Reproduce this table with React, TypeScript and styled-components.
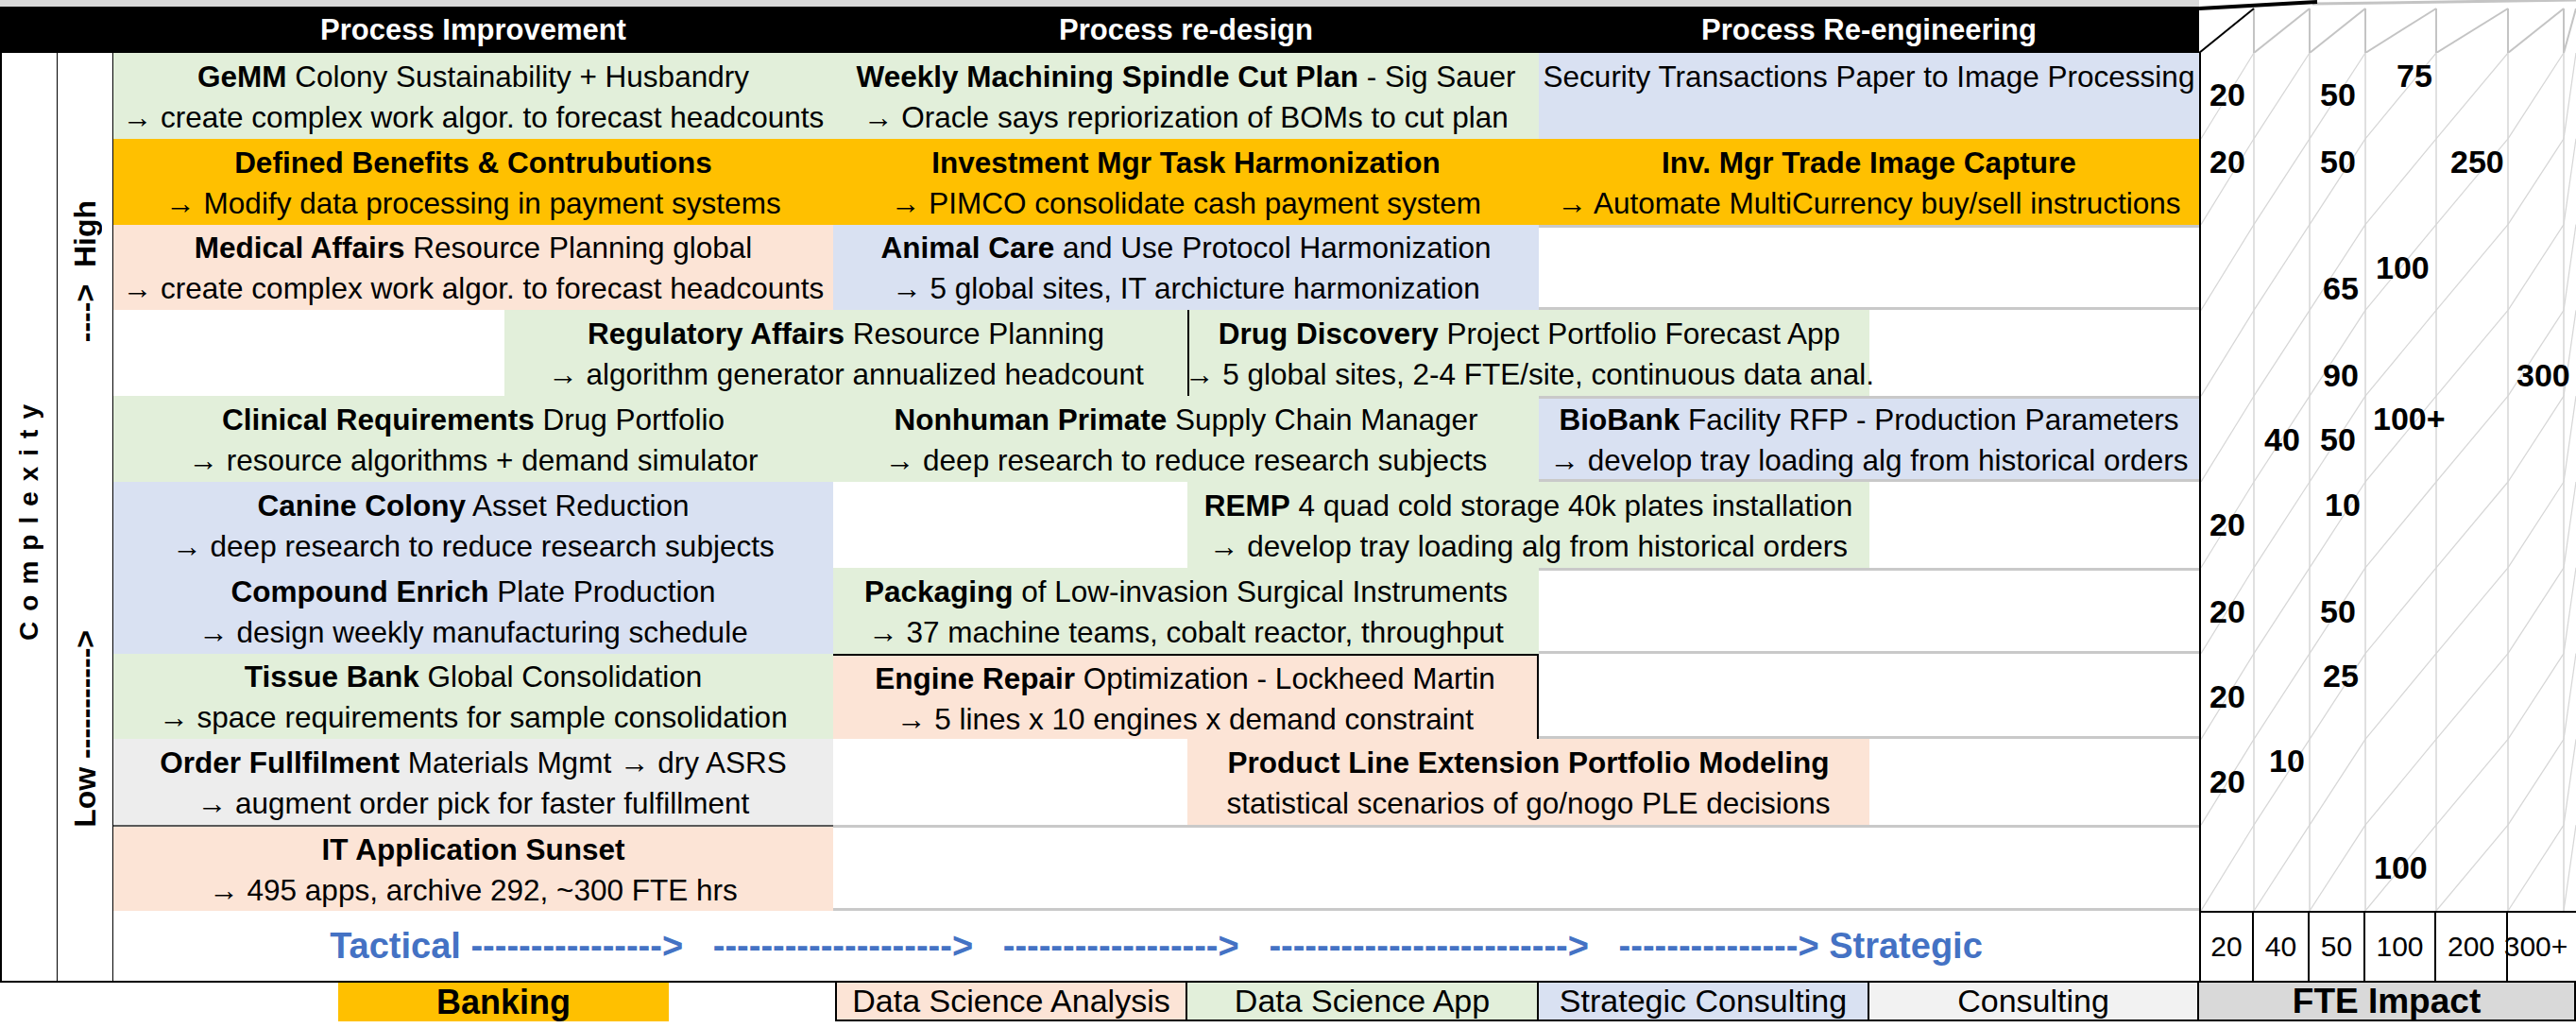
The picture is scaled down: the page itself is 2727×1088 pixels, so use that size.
import React from "react";
import styled, { createGlobalStyle } from "styled-components";

const GlobalStyle = createGlobalStyle`
  html, body {
    margin: 0;
    padding: 0;
    overflow: hidden;
    background: #ffffff;
  }
  body {
    font-family: "Liberation Sans", Arial, sans-serif;
    color: #000000;
  }
`;

const TONES = {
  green: "#e2efda",
  blue: "#d9e1f2",
  peach: "#fce4d6",
  orange: "#ffc000",
  gray: "#ededed",
  light: "#f2f2f2",
  fte: "#d9d9d9",
  white: "#ffffff",
};

type Tone = keyof typeof TONES;

const GRAY_RULE = "3px solid #c9c9c9";
const BLACK_RULE = "2px solid #000000";

// FTE column edges, from the panel's inner left edge
const FTE_COLS = [0, 56, 115, 174, 249, 325, 384, 397];
const ROW_H = 90.8;

type Entry = {
  row: number;
  col: number;
  span: number;
  tone: Tone;
  title?: string;
  rest?: string;
  sub?: string;
  bt?: string;
  bb?: string;
  bl?: string;
  br?: string;
};

const CELLS: Entry[] = [
  { row: 1, col: 1, span: 2, tone: "green", title: "GeMM", rest: " Colony Sustainability + Husbandry", sub: "→ create complex work algor. to forecast headcounts" },
  { row: 1, col: 3, span: 2, tone: "green", title: "Weekly Machining Spindle Cut Plan", rest: " - Sig Sauer", sub: "→ Oracle says repriorization of BOMs to cut plan" },
  { row: 1, col: 5, span: 2, tone: "blue", rest: "Security Transactions Paper to Image Processing", sub: "\u00a0" },
  { row: 2, col: 1, span: 2, tone: "orange", title: "Defined Benefits & Contrubutions", sub: "→ Modify data processing in payment systems" },
  { row: 2, col: 3, span: 2, tone: "orange", title: "Investment Mgr Task Harmonization", sub: "→ PIMCO consolidate cash payment system" },
  { row: 2, col: 5, span: 2, tone: "orange", title: "Inv. Mgr Trade Image Capture", sub: "→ Automate MultiCurrency buy/sell instructions" },
  { row: 3, col: 1, span: 2, tone: "peach", title: "Medical Affairs", rest: " Resource Planning global", sub: "→ create complex work algor. to forecast headcounts" },
  { row: 3, col: 3, span: 2, tone: "blue", title: "Animal Care", rest: " and Use Protocol Harmonization", sub: "→ 5 global sites, IT archicture harmonization" },
  { row: 3, col: 5, span: 2, tone: "white", bt: GRAY_RULE, bb: GRAY_RULE },
  { row: 4, col: 1, span: 1, tone: "white" },
  { row: 4, col: 2, span: 2, tone: "green", title: "Regulatory Affairs", rest: " Resource Planning", sub: "→ algorithm generator annualized headcount" },
  { row: 4, col: 4, span: 2, tone: "green", title: "Drug Discovery", rest: " Project Portfolio Forecast App", sub: "→ 5 global sites, 2-4 FTE/site, continuous data anal.", bl: BLACK_RULE },
  { row: 4, col: 6, span: 1, tone: "white" },
  { row: 5, col: 1, span: 2, tone: "green", title: "Clinical Requirements", rest: " Drug Portfolio", sub: "→ resource algorithms + demand simulator" },
  { row: 5, col: 3, span: 2, tone: "green", title: "Nonhuman Primate", rest: " Supply Chain Manager", sub: "→ deep research to reduce research subjects" },
  { row: 5, col: 5, span: 2, tone: "blue", title: "BioBank", rest: " Facility RFP - Production Parameters", sub: "→ develop tray loading alg from historical orders", bt: GRAY_RULE, bb: GRAY_RULE },
  { row: 6, col: 1, span: 2, tone: "blue", title: "Canine Colony", rest: " Asset Reduction", sub: "→ deep research to reduce research subjects" },
  { row: 6, col: 3, span: 1, tone: "white" },
  { row: 6, col: 4, span: 2, tone: "green", title: "REMP", rest: " 4 quad cold storage 40k plates installation", sub: "→ develop tray loading alg from historical orders" },
  { row: 6, col: 6, span: 1, tone: "white" },
  { row: 7, col: 1, span: 2, tone: "blue", title: "Compound Enrich", rest: " Plate Production", sub: "→ design weekly manufacturing schedule" },
  { row: 7, col: 3, span: 2, tone: "green", title: "Packaging", rest: " of Low-invasion Surgical Instruments", sub: "→ 37 machine teams, cobalt reactor, throughput" },
  { row: 7, col: 5, span: 2, tone: "white", bt: GRAY_RULE, bb: GRAY_RULE },
  { row: 8, col: 1, span: 2, tone: "green", title: "Tissue Bank", rest: " Global Consolidation", sub: "→ space requirements for sample consolidation" },
  { row: 8, col: 3, span: 2, tone: "peach", title: "Engine Repair", rest: " Optimization - Lockheed Martin", sub: "→ 5 lines x 10 engines x demand constraint", bt: BLACK_RULE, br: BLACK_RULE },
  { row: 8, col: 5, span: 2, tone: "white", bb: GRAY_RULE },
  { row: 9, col: 1, span: 2, tone: "gray", title: "Order Fullfilment", rest: " Materials Mgmt → dry ASRS", sub: "→ augment order pick for faster fulfillment" },
  { row: 9, col: 3, span: 1, tone: "white" },
  { row: 9, col: 4, span: 2, tone: "peach", title: "Product Line Extension Portfolio Modeling", sub: "statistical scenarios of go/nogo PLE decisions" },
  { row: 9, col: 6, span: 1, tone: "white" },
  { row: 10, col: 1, span: 2, tone: "peach", title: "IT Application Sunset", sub: "→ 495 apps, archive 292, ~300 FTE hrs", bt: "2px solid #595959" },
  { row: 10, col: 3, span: 4, tone: "white", bt: GRAY_RULE, bb: GRAY_RULE },
];

const FTE_MARKS = [
  { v: "20", x: 2339, y: 100 },
  { v: "50", x: 2456, y: 100 },
  { v: "75", x: 2537, y: 80 },
  { v: "20", x: 2339, y: 171 },
  { v: "50", x: 2456, y: 171 },
  { v: "250", x: 2594, y: 171 },
  { v: "100", x: 2515, y: 283 },
  { v: "65", x: 2459, y: 305 },
  { v: "90", x: 2459, y: 397 },
  { v: "300", x: 2664, y: 397 },
  { v: "100+", x: 2512, y: 443 },
  { v: "40", x: 2397, y: 465 },
  { v: "50", x: 2456, y: 465 },
  { v: "10", x: 2461, y: 534 },
  { v: "20", x: 2339, y: 555 },
  { v: "20", x: 2339, y: 647 },
  { v: "50", x: 2456, y: 647 },
  { v: "25", x: 2459, y: 715 },
  { v: "20", x: 2339, y: 737 },
  { v: "10", x: 2402, y: 805 },
  { v: "20", x: 2339, y: 827 },
  { v: "100", x: 2513, y: 918 },
];

const SCALE = ["20", "40", "50", "100", "200", "300+", ""];

const Page = styled.div`
  width: 2727px;
  height: 1088px;
  display: flex;
  flex-direction: column;
  overflow: hidden;
`;

const Board = styled.div`
  display: flex;
  flex: none;
  height: 1040px;
  box-sizing: border-box;
  border-bottom: 2px solid #000;
`;

const Matrix = styled.div`
  width: 2328px;
  display: flex;
  flex-direction: column;
`;

const TopBar = styled.div`
  flex: none;
  height: 7px;
  background: #d9d9d9;
`;

const HeaderBar = styled.div`
  flex: none;
  height: 49px;
  background: #000;
  display: grid;
  grid-template-columns: 120px 762px 747px 699px;
  align-items: center;
`;

const HeaderTitle = styled.div`
  color: #fff;
  font-weight: 700;
  font-size: 31px;
  text-align: center;
  white-space: nowrap;
`;

const MatrixBody = styled.div`
  flex: 1;
  display: flex;
  min-height: 0;
`;

const ComplexityCol = styled.div`
  width: 61px;
  box-sizing: border-box;
  border-left: 2px solid #000;
  border-right: 1px solid #000;
  display: flex;
  align-items: center;
  justify-content: center;
`;

const LevelCol = styled.div`
  width: 59px;
  box-sizing: border-box;
  border-right: 1px solid #000;
  display: flex;
  flex-direction: column;
`;

const LevelHalf = styled.div<{ $lift: number }>`
  flex: 1;
  display: flex;
  align-items: center;
  justify-content: center;
  padding-bottom: ${(p) => p.$lift}px;
`;

const VerticalLabel = styled.span<{ $size: number; $spacing?: number }>`
  writing-mode: vertical-rl;
  transform: rotate(180deg);
  font-weight: 700;
  font-size: ${(p) => p.$size}px;
  letter-spacing: ${(p) => p.$spacing ?? 0}px;
  white-space: pre;
  line-height: 1;
`;

const Content = styled.div`
  flex: 1;
  display: flex;
  flex-direction: column;
`;

const Grid = styled.div`
  flex: none;
  height: 908px;
  display: grid;
  grid-template-columns: 414px 348px 375px 372px 350px 349px;
  grid-template-rows: repeat(10, minmax(0, 1fr));
`;

const Cell = styled.div<{
  $row: number;
  $col: number;
  $span: number;
  $tone: Tone;
  $bt?: string;
  $bb?: string;
  $bl?: string;
  $br?: string;
}>`
  grid-row: ${(p) => p.$row};
  grid-column: ${(p) => p.$col} / span ${(p) => p.$span};
  position: relative;
  z-index: ${(p) => (p.$tone === "white" ? 0 : 1)};
  background: ${(p) => TONES[p.$tone]};
  box-sizing: border-box;
  border-top: ${(p) => p.$bt ?? "none"};
  border-bottom: ${(p) => p.$bb ?? "none"};
  border-left: ${(p) => p.$bl ?? "none"};
  border-right: ${(p) => p.$br ?? "none"};
  padding-top: 3px;
  display: flex;
  flex-direction: column;
  align-items: center;
  justify-content: center;
  font-size: 31.5px;
  line-height: 43px;
  white-space: nowrap;
  min-width: 0;
  min-height: 0;
`;

const Line = styled.div``;

const Strong = styled.b`
  font-weight: 700;
`;

const TacticalRow = styled.div`
  flex: none;
  height: 74px;
  display: flex;
  align-items: center;
  justify-content: center;
  color: #4472c4;
  font-weight: 700;
  font-size: 38px;
  white-space: pre;
`;

const FtePanel = styled.div`
  width: 399px;
  display: flex;
  flex-direction: column;
  overflow: hidden;
`;

const FteHead = styled.div`
  flex: none;
  height: 56px;
`;

const FteBody = styled.div`
  flex: none;
  position: relative;
  height: 908px;
  border-left: 2px solid #000;
`;

const Drawing = styled.svg`
  position: absolute;
  inset: 0;
  display: block;
`;

const Mark = styled.div<{ $x: number; $y: number }>`
  position: absolute;
  left: ${(p) => p.$x}px;
  top: ${(p) => p.$y}px;
  font-weight: 700;
  font-size: 34px;
  line-height: 34px;
  white-space: nowrap;
`;

const FteScale = styled.div`
  flex: none;
  height: 74px;
  box-sizing: border-box;
  border-left: 2px solid #000;
  border-top: 2px solid #000;
  display: grid;
  grid-template-columns: 56px 59px 59px 75px 76px 59px 13px;
`;

const ScaleCell = styled.div<{ $last?: boolean }>`
  box-sizing: border-box;
  border-right: ${(p) => (p.$last ? "none" : "2px solid #000")};
  display: flex;
  align-items: center;
  justify-content: center;
  font-size: 30px;
  white-space: nowrap;
`;

const Legend = styled.div`
  display: flex;
  flex: none;
  height: 41px;
`;

const LegendGap = styled.div<{ $w: number }>`
  width: ${(p) => p.$w}px;
`;

const LegendItem = styled.div<{
  $w: number;
  $tone: Tone;
  $plain?: boolean;
  $first?: boolean;
  $bold?: boolean;
  $size: number;
}>`
  width: ${(p) => p.$w}px;
  flex: none;
  box-sizing: border-box;
  background: ${(p) => TONES[p.$tone]};
  border-right: ${(p) => (p.$plain ? "none" : "2px solid #000")};
  border-bottom: ${(p) => (p.$plain ? "none" : "2px solid #000")};
  border-left: ${(p) => (p.$first ? "2px solid #000" : "none")};
  display: flex;
  align-items: center;
  justify-content: center;
  font-size: ${(p) => p.$size}px;
  font-weight: ${(p) => (p.$bold ? 700 : 400)};
  white-space: nowrap;
`;

function FteHeadDrawing() {
  const b = [0, 58, 117, 176, 251, 327, 386, 399];
  return (
    <svg width="399" height="56" viewBox="0 0 399 56">
      {b.slice(1, 7).map((x) => (
        <line key={"v" + x} x1={x} y1={9} x2={x} y2={56} stroke="#c4c4c4" strokeWidth={2} />
      ))}
      {b.slice(1, 7).map((x, i) => (
        <line key={"d" + x} x1={x} y1={56} x2={b[i + 2]} y2={9} stroke="#c4c4c4" strokeWidth={2} />
      ))}
      <line x1={120} y1={4} x2={399} y2={0} stroke="#c4c4c4" strokeWidth={3} />
      <line x1={0} y1={9} x2={125} y2={2} stroke="#000" strokeWidth={4} />
      <line x1={0} y1={56} x2={58} y2={9} stroke="#000" strokeWidth={2} />
    </svg>
  );
}

function FteHatch() {
  const lines: React.ReactElement[] = [];
  for (let c = 0; c < FTE_COLS.length - 1; c++) {
    for (let r = 0; r < 10; r++) {
      lines.push(
        <line
          key={`${c}-${r}`}
          x1={FTE_COLS[c]}
          y1={(r + 1) * ROW_H}
          x2={FTE_COLS[c + 1]}
          y2={r * ROW_H}
          stroke="#d6d6d6"
          strokeWidth={1.2}
        />
      );
    }
  }
  return (
    <Drawing width="397" height="908" viewBox="0 0 397 908">
      {FTE_COLS.slice(1, 7).map((x) => (
        <line key={"v" + x} x1={x} y1={0} x2={x} y2={908} stroke="#d6d6d6" strokeWidth={1.5} />
      ))}
      {lines}
    </Drawing>
  );
}

export default function App() {
  return (
    <Page>
      <GlobalStyle />
      <Board>
        <Matrix>
          <TopBar />
          <HeaderBar>
            <span />
            <HeaderTitle>Process Improvement</HeaderTitle>
            <HeaderTitle>Process re-design</HeaderTitle>
            <HeaderTitle>Process Re-engineering</HeaderTitle>
          </HeaderBar>
          <MatrixBody>
            <ComplexityCol>
              <VerticalLabel $size={28} $spacing={11}>
                Complexity
              </VerticalLabel>
            </ComplexityCol>
            <LevelCol>
              <LevelHalf $lift={22}>
                <VerticalLabel $size={32}>{"---->  High"}</VerticalLabel>
              </LevelHalf>
              <LevelHalf $lift={35}>
                <VerticalLabel $size={32}>{"Low ----------->"}</VerticalLabel>
              </LevelHalf>
            </LevelCol>
            <Content>
              <Grid>
                {CELLS.map((c) => (
                  <Cell
                    key={`${c.row}-${c.col}`}
                    $row={c.row}
                    $col={c.col}
                    $span={c.span}
                    $tone={c.tone}
                    $bt={c.bt}
                    $bb={c.bb}
                    $bl={c.bl}
                    $br={c.br}
                  >
                    {(c.title || c.rest) && (
                      <Line>
                        {c.title && <Strong>{c.title}</Strong>}
                        {c.rest}
                      </Line>
                    )}
                    {c.sub && <Line>{c.sub}</Line>}
                  </Cell>
                ))}
              </Grid>
              <TacticalRow>
                {"Tactical ---------------->   -------------------->   ------------------>   ------------------------->   ---------------> Strategic"}
              </TacticalRow>
            </Content>
          </MatrixBody>
        </Matrix>
        <FtePanel>
          <FteHead>
            <FteHeadDrawing />
          </FteHead>
          <FteBody>
            <FteHatch />
            {FTE_MARKS.map((m, i) => (
              <Mark key={i} $x={m.x - 2330} $y={m.y - 56 - 17}>
                {m.v}
              </Mark>
            ))}
          </FteBody>
          <FteScale>
            {SCALE.map((s, i) => (
              <ScaleCell key={i} $last={i >= SCALE.length - 2}>
                {s}
              </ScaleCell>
            ))}
          </FteScale>
        </FtePanel>
      </Board>
      <Legend>
        <LegendGap $w={358} />
        <LegendItem $w={350} $tone="orange" $plain $bold $size={36}>
          Banking
        </LegendItem>
        <LegendGap $w={176} />
        <LegendItem $w={373} $tone="peach" $first $size={34}>
          Data Science Analysis
        </LegendItem>
        <LegendItem $w={372} $tone="green" $size={34}>
          Data Science App
        </LegendItem>
        <LegendItem $w={350} $tone="blue" $size={34}>
          Strategic Consulting
        </LegendItem>
        <LegendItem $w={349} $tone="light" $size={34}>
          Consulting
        </LegendItem>
        <LegendItem $w={399} $tone="fte" $bold $size={37}>
          FTE Impact
        </LegendItem>
      </Legend>
    </Page>
  );
}
